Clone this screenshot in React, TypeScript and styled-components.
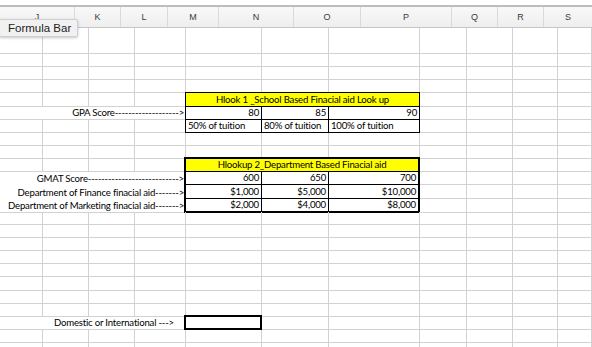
import React from "react";
import styled, { createGlobalStyle, css } from "styled-components";

const GlobalStyle = createGlobalStyle`
  html, body { margin: 0; padding: 0; background: #fff; }
  body { width: 592px; height: 347px; overflow: hidden; }
  * { box-sizing: border-box; }
`;

const COLS = [43, 46, 46, 51, 76, 67, 91, 47, 46, 45];
const HEAD_COLS = [75, 46, 47, 51, 75, 67, 91, 46, 46];
const HEAD_LABELS = ["J", "K", "L", "M", "N", "O", "P", "Q", "R", "S"];
const ROW_H = 13.15;
const GRID_LINE = "#d2d2d2";
const CELL_FONT = `"Lato", "Liberation Sans", sans-serif`;

const Window = styled.div`
  position: relative;
  width: 592px;
  height: 347px;
  overflow: hidden;
  background: #fff;
  padding-top: 5px;
`;

const ColumnHeader = styled.div`
  display: grid;
  grid-template-columns: ${HEAD_COLS.map((w) => `${w}px`).join(" ")} 1fr;
  height: 23px;
  border-top: 2px solid #bdbdbd;
  border-bottom: 1px solid #c6c6c6;
  background: linear-gradient(#f8f8f8, #eeeeee);
`;

const HeadCell = styled.div`
  display: flex;
  align-items: center;
  justify-content: center;
  border-right: 1px solid #dadada;
  font: 9px "Liberation Sans", Arial, sans-serif;
  color: #3a3a3a;
  &:last-child {
    border-right: none;
  }
`;

const Tooltip = styled.div`
  position: absolute;
  left: -1px;
  top: 19px;
  width: 79px;
  height: 18px;
  padding-left: 8px;
  display: flex;
  align-items: center;
  background: #f1f1f1;
  border: 1px solid #cfcfcf;
  border-radius: 2px;
  box-shadow: 0 1px 3px rgba(0, 0, 0, 0.22);
  font: 11.5px "Liberation Sans", Arial, sans-serif;
  color: #222;
  z-index: 2;
`;

const Sheet = styled.div`
  display: flex;
  flex-direction: column;
`;

const Row = styled.div<{ $h?: number }>`
  display: grid;
  grid-template-columns: ${COLS.map((w) => `${w}px`).join(" ")} 1fr;
  height: ${(p) => p.$h ?? ROW_H}px;
  flex: none;
`;

type Edges = { t?: number; r?: number; b?: number; l?: number };

const Cell = styled.div<{
  $span?: number;
  $align?: "left" | "right" | "center";
  $kind?: "grid" | "label" | "ink";
  $bg?: string;
  $noBottom?: boolean;
  $edges?: Edges;
  $indent?: number;
}>`
  grid-column: span ${(p) => p.$span ?? 1};
  display: flex;
  align-items: flex-end;
  justify-content: ${(p) =>
    p.$align === "right" ? "flex-end" : p.$align === "center" ? "center" : "flex-start"};
  padding: 0 2px 1px ${(p) => p.$indent ?? 2}px;
  background: ${(p) => p.$bg ?? "transparent"};
  font: 9.6px/11px ${CELL_FONT};
  letter-spacing: -0.2px;
  color: #000;
  white-space: nowrap;
  ${(p) =>
    p.$kind === "label"
      ? css`
          background: #fff;
          border-bottom: ${p.$noBottom ? "none" : `1px solid ${GRID_LINE}`};
        `
      : p.$kind === "ink"
      ? css`
          border-right: ${p.$edges?.r ?? 1}px solid #000;
          border-bottom: ${p.$edges?.b ?? 1}px solid #000;
          box-shadow: -${p.$edges?.l ?? 1}px 0 0 #000, 0 -${p.$edges?.t ?? 1}px 0 #000,
            -${p.$edges?.l ?? 1}px -${p.$edges?.t ?? 1}px 0 #000;
        `
      : css`
          border-right: 1px solid ${GRID_LINE};
          border-bottom: 1px solid ${GRID_LINE};
        `}
`;

const YELLOW = "#ffff00";

const Blank = ({ n }: { n: number }) => (
  <>
    {Array.from({ length: n }, (_, i) => (
      <Cell key={i} />
    ))}
  </>
);

type TableRow = { label?: string; labelNoBottom?: boolean; values: string[]; align: "left" | "right" };

const table1: TableRow[] = [
  { label: "GPA Score------------------->", values: ["80", "85", "90"], align: "right" },
  { values: ["50% of tuition", "80% of tuition", "100% of tuition"], align: "left" },
];

const table2: TableRow[] = [
  { label: "GMAT Score--------------------------->", labelNoBottom: true, values: ["600", "650", "700"], align: "right" },
  { label: "Department of Finance finacial aid------->", labelNoBottom: true, values: ["$1,000", "$5,000", "$10,000"], align: "right" },
  { label: "Department of Marketing finacial aid------->", values: ["$2,000", "$4,000", "$8,000"], align: "right" },
];

const EmptyRow = () => (
  <Row>
    <Blank n={11} />
  </Row>
);

const TableTitleRow = ({ title, w }: { title: string; w: number }) => (
  <Row>
    <Blank n={4} />
    <Cell $span={3} $kind="ink" $bg={YELLOW} $align="center" $edges={{ t: w, l: w, r: w }}>
      {title}
    </Cell>
    <Blank n={4} />
  </Row>
);

const TableBody = ({ rows, w }: { rows: TableRow[]; w: number }) => (
  <>
    {rows.map((r, ri) => {
      const last = ri === rows.length - 1;
      return (
        <Row key={ri}>
          {r.label ? (
            <Cell $span={4} $kind="label" $align="right" $noBottom={r.labelNoBottom}>
              {r.label}
            </Cell>
          ) : (
            <Blank n={4} />
          )}
          {r.values.map((v, vi) => (
            <Cell
              key={vi}
              $kind="ink"
              $align={r.align}
              $edges={{
                l: vi === 0 ? w : 1,
                r: vi === 2 ? w : 1,
                b: last ? w : 1,
              }}
            >
              {v}
            </Cell>
          ))}
          <Blank n={4} />
        </Row>
      );
    })}
  </>
);

export default function App() {
  return (
    <Window>
      <GlobalStyle />
      <ColumnHeader>
        {HEAD_LABELS.map((l) => (
          <HeadCell key={l}>{l}</HeadCell>
        ))}
      </ColumnHeader>
      <Tooltip>Formula Bar</Tooltip>
      <Sheet>
        <Row $h={26}>
          <Blank n={11} />
        </Row>
        <EmptyRow />
        <EmptyRow />
        <EmptyRow />
        <TableTitleRow title="Hlook 1 _School Based Finacial aid Look up" w={1} />
        <TableBody rows={table1} w={1} />
        <EmptyRow />
        <EmptyRow />
        <TableTitleRow title="Hlookup 2_Department Based Finacial aid" w={2} />
        <TableBody rows={table2} w={2} />
        {Array.from({ length: 8 }, (_, i) => (
          <EmptyRow key={`a${i}`} />
        ))}
        <Row>
          <Cell $span={4} $kind="label" $indent={54}>
            Domestic or International ---&gt;
          </Cell>
          <Cell $kind="ink" $edges={{ t: 2, l: 2, r: 2, b: 2 }} />
          <Blank n={6} />
        </Row>
        <EmptyRow />
        <EmptyRow />
        <EmptyRow />
      </Sheet>
    </Window>
  );
}
